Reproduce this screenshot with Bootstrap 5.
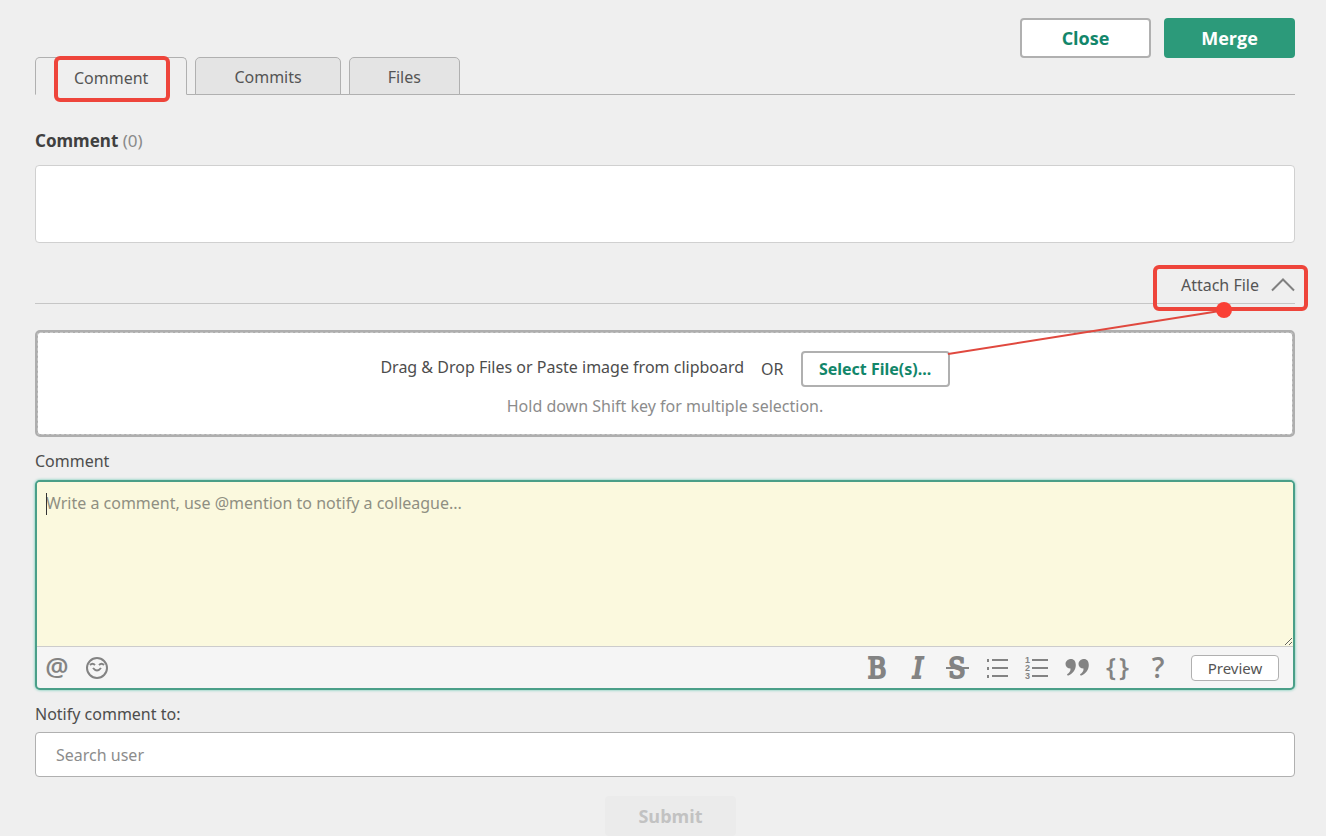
<!DOCTYPE html>
<html lang="en">
<head>
<meta charset="utf-8">
<meta name="viewport" content="width=device-width, initial-scale=1">
<title>Pull request</title>
<link href="https://cdn.jsdelivr.net/npm/bootstrap@5.3.0/dist/css/bootstrap.min.css" rel="stylesheet">
<style>
  :root { --accent: #2c9a7a; --accent-text: #12866a; --edge: #b0b0b0; --note: #ee453b; }
  body { background: #efefef; color: #4d4d4d; font: 400 16px/24px "Noto Sans", "Open Sans", sans-serif; overflow-x: hidden; }
  .page { padding: 18px 31px 0 35px; }
  .topbar { border-bottom: 1px solid var(--edge); }
  .tabs { gap: 8px; border: 0; margin-bottom: -1px; }
  .tabs .nav-link { height: 38px; padding: 7px 38px 0; margin: 0; border: 1px solid var(--edge); border-radius: 5px 5px 0 0; background: #e4e4e4; color: #555; line-height: 24px; }
  .tabs .nav-link.active { position: relative; background: #efefef; border-color: var(--edge) var(--edge) #efefef; color: #555; padding-top: 8px; }
  .actions { gap: 13px; margin-bottom: 36px; }
  .action { width: 131px; height: 40px; padding: 0; border-radius: 4px; font: 700 18px/24px "Open Sans", sans-serif; }
  .plain, .plain:hover { background: #fff; border: 2px solid var(--edge); color: var(--accent-text); }
  .solid, .solid:hover { background: var(--accent); border: 0; color: #fff; }
  .heading { font-size: 17px; line-height: 24px; font-weight: 700; color: #404040; margin: 34px 0 12px; }
  .heading span { font-weight: 400; color: #8a8a8a; }
  .thread { height: 78px; background: #fff; border: 1px solid #d0d0d0; border-radius: 4px; }
  .attach-row { margin-top: 30px; padding-bottom: 6px; border-bottom: 1px solid #c6c6c6; }
  .attach-toggle { position: relative; border: 0; padding: 0; background: none; color: #555; gap: 12px; }
  .note::before { content: ""; position: absolute; border: 4px solid var(--note); border-radius: 6px; pointer-events: none; }
  .attach-toggle.note::before { inset: -8px -13px -14px -28px; }
  .nav-link.note::before { inset: -2px 16px -8px 18px; }
  .callout { position: absolute; right: 61px; top: 26px; pointer-events: none; z-index: 2; }
  .dropzone { margin-top: 26px; padding: 18px 12px 16px; background: #fff; border: 3px solid #aeaeae; outline: 1px dashed #c8c8c8; outline-offset: -3px; border-radius: 5px; }
  .dropzone .choices { gap: 17px; margin-bottom: 7px; }
  .select-btn { width: 149px; height: 36px; padding: 0; border-radius: 4px; font-weight: 700; line-height: 24px; }
  .hint { color: #8c8c8c; }
  .field-label { display: block; margin-top: 12px; }
  .editor { margin-top: 7px; border: 2px solid #4a9f88; border-radius: 5px; background: #f5f5f5; box-shadow: 0 0 3px #5cc5ad; position: relative; overflow: hidden; }
  .editor textarea { display: block; width: 100%; height: 164px; padding: 9px 9px; border: 0; background: #fbf9de; color: #4d4d4d; outline: 0; resize: vertical; caret-color: transparent; }
  .editor textarea::placeholder { color: #8f8f82; opacity: 1; }
  .caret { position: absolute; left: 9px; top: 11px; width: 1px; height: 22px; background: #333; }
  .tools { height: 42px; border-top: 1px solid #ccc; padding-right: 14px; }
  .tool { width: 40px; height: 40px; padding: 0; border: 0; background: none; color: #838383; }
  .tool svg { display: block; fill: currentColor; stroke: none; }
  .tool .ln { fill: none; stroke: currentColor; stroke-width: 2; }
  .tool .slab { font: 400 28px "DejaVu Serif Condensed", "DejaVu Serif", serif; text-anchor: middle; stroke: currentColor; stroke-width: 2px; }
  .tool .slanted { font-style: italic; }
  .sans { font: 600 26px "Open Sans", sans-serif; text-anchor: middle; }
  .sans.tall { font-size: 28px; }
  .nums { font: 700 9px "Liberation Sans", sans-serif; }
  .preview { width: 88px; height: 26px; margin-left: 13px; padding: 0; background: #fff; border: 1px solid var(--edge); border-radius: 4px; color: #555; font-size: 15px; line-height: 24px; }
  .search { height: 45px; margin-top: 6px; padding: 0 20px; border: 1px solid var(--edge); border-radius: 4px; font-size: 16px; }
  .search::placeholder { color: #8c8c8c; }
  .foot { margin-top: 19px; padding-left: 11px; }
  .submit:disabled { background: #ebebeb; border: 0; color: #c2c2c2; opacity: 1; }
</style>
</head>
<body>
<main class="page">
  <header class="topbar d-flex justify-content-between align-items-end">
    <ul class="nav nav-tabs tabs">
      <li class="nav-item"><a class="nav-link active note" href="#comment" aria-current="page">Comment</a></li>
      <li class="nav-item"><a class="nav-link" href="#commits">Commits</a></li>
      <li class="nav-item"><a class="nav-link" href="#files">Files</a></li>
    </ul>
    <div class="actions d-flex">
      <button type="button" class="btn action plain">Close</button>
      <button type="button" class="btn action solid">Merge</button>
    </div>
  </header>

  <h2 class="heading">Comment <span>(0)</span></h2>
  <section class="thread"></section>

  <form>
    <div class="attach-row d-flex justify-content-end">
      <button type="button" class="attach-toggle note d-flex align-items-center" aria-expanded="true">
        Attach File
        <svg width="24" height="14" viewBox="0 0 24 14" fill="none" stroke="#808080" stroke-width="2" aria-hidden="true"><path d="M1 12.500 12 1.500 23 12.500"/></svg>
        <svg class="callout" width="286" height="56" viewBox="0 0 286 56" aria-hidden="true"><path d="M0 55 278 11" stroke="#e0483e" stroke-width="2"/><circle cx="276" cy="11" r="8" fill="#fa4036"/></svg>
      </button>
    </div>

    <div class="dropzone text-center">
      <div class="choices d-flex justify-content-center align-items-center">
        <span class="mb-1">Drag &amp; Drop Files or Paste image from clipboard</span>
        <span>OR</span>
        <button type="button" class="btn plain select-btn">Select File(s)...</button>
      </div>
      <div class="hint">Hold down Shift key for multiple selection.</div>
    </div>

    <label class="field-label" for="body">Comment</label>
    <div class="editor">
      <textarea id="body" placeholder="Write a comment, use @mention to notify a colleague..."></textarea>
      <span class="caret"></span>
      <div class="tools d-flex align-items-center">
        <button type="button" class="tool" aria-label="Mention"><svg width="40" height="40"><text class="sans" x="20" y="28">@</text></svg></button>
        <button type="button" class="tool" aria-label="Emoji"><svg width="40" height="40"><circle class="ln" cx="20" cy="20" r="10"/><path class="ln" d="M13 17q2.500-2.500 5 0M22 17q2.500-2.500 5 0M16 20q4 5 8 0"/></svg></button>
        <button type="button" class="tool ms-auto" aria-label="Bold"><svg width="40" height="40"><text class="slab" x="19" y="30">B</text></svg></button>
        <button type="button" class="tool" aria-label="Italic"><svg width="40" height="40"><text class="slab slanted" x="20" y="30">I</text></svg></button>
        <button type="button" class="tool" aria-label="Strikethrough"><svg width="40" height="40"><text class="slab" x="19" y="30">S</text><path class="ln" d="M8 20h23"/></svg></button>
        <button type="button" class="tool" aria-label="Bulleted list"><svg width="40" height="40"><path d="M9 11h2v3H9zM9 19h2v3H9zM9 27h2v3H9zM14 11h16v2H14zM14 19h16v2H14zM14 27h16v2H14z"/></svg></button>
        <button type="button" class="tool" aria-label="Numbered list"><svg width="40" height="40"><g class="nums"><text x="7" y="15">1</text><text x="7" y="23">2</text><text x="7" y="31">3</text></g><path d="M14 11h16v2H14zM14 19h16v2H14zM14 27h16v2H14z"/></svg></button>
        <button type="button" class="tool" aria-label="Quote"><svg width="40" height="40"><g transform="translate(-1 0)"><path d="M14 11c-3 0-5.500 2.200-5.500 5 0 2.700 2 4.600 5 4.600.4 2.500-1.300 4.600-3.500 5.600l.8 1.600c5-1.800 8-6 8-10.800 0-3.800-1.800-6-4.800-6z"/><path transform="translate(13)" d="M14 11c-3 0-5.500 2.200-5.500 5 0 2.700 2 4.600 5 4.600.4 2.500-1.300 4.600-3.500 5.600l.8 1.600c5-1.800 8-6 8-10.800 0-3.800-1.800-6-4.800-6z"/></g></svg></button>
        <button type="button" class="tool" aria-label="Code"><svg width="40" height="40"><text class="sans" x="13" y="28">{</text><text class="sans" x="26" y="28">}</text></svg></button>
        <button type="button" class="tool" aria-label="Help"><svg width="40" height="40"><text class="sans tall" x="20" y="30">?</text></svg></button>
        <button type="button" class="preview">Preview</button>
      </div>
    </div>

    <label class="field-label" for="notify">Notify comment to:</label>
    <input type="text" id="notify" class="form-control search" placeholder="Search user">

    <div class="foot text-center">
      <button type="submit" class="btn action submit d-block mx-auto" disabled>Submit</button>
    </div>
  </form>
</main>
<script src="https://cdn.jsdelivr.net/npm/bootstrap@5.3.0/dist/js/bootstrap.bundle.min.js"></script>
</body>
</html>
